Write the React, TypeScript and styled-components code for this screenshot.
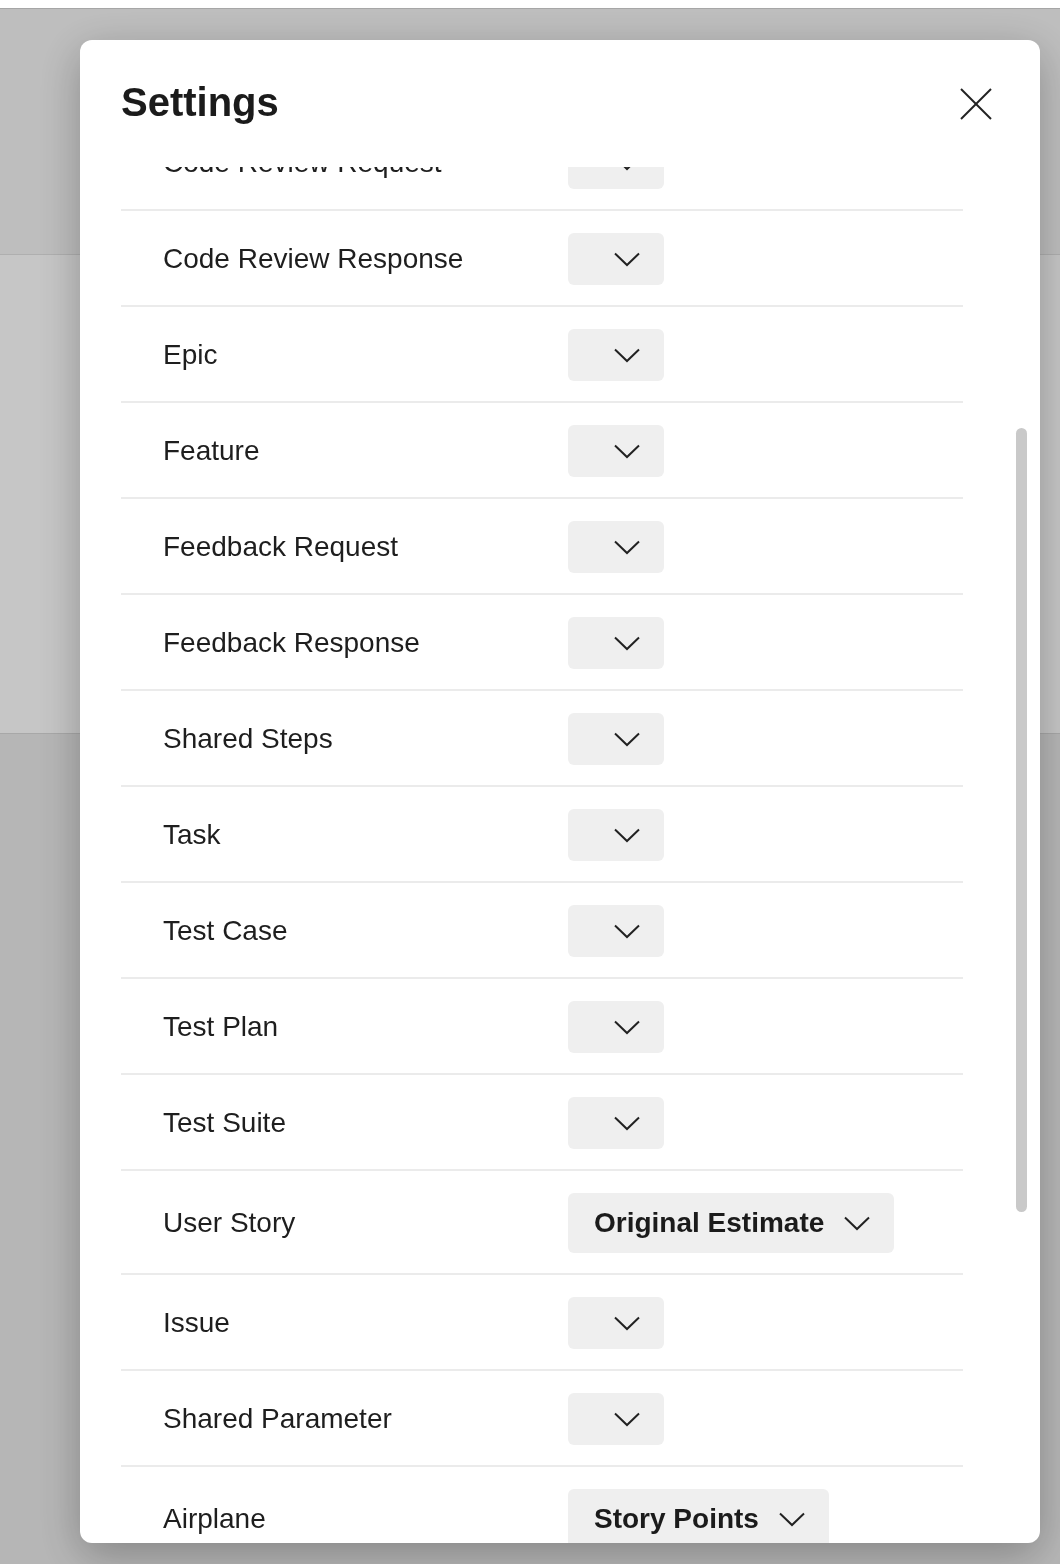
import React, { useLayoutEffect, useRef } from 'react';
import styled, { createGlobalStyle } from 'styled-components';

type WorkItemType = {
  name: string;
  field?: string;
};

const workItemTypes: WorkItemType[] = [
  { name: 'Bug' },
  { name: 'Change Request' },
  { name: 'Code Review Request' },
  { name: 'Code Review Response' },
  { name: 'Epic' },
  { name: 'Feature' },
  { name: 'Feedback Request' },
  { name: 'Feedback Response' },
  { name: 'Shared Steps' },
  { name: 'Task' },
  { name: 'Test Case' },
  { name: 'Test Plan' },
  { name: 'Test Suite' },
  { name: 'User Story', field: 'Original Estimate' },
  { name: 'Issue' },
  { name: 'Shared Parameter' },
  { name: 'Airplane', field: 'Story Points' },
  { name: 'Impediment' },
  { name: 'Risk' },
  { name: 'Review' },
  { name: 'Scenario' },
  { name: 'Requirement' },
  { name: 'Product Backlog Item' },
];

// row that sits half hidden under the header in the screenshot
const FIRST_VISIBLE = 'Code Review Request';
const FIRST_VISIBLE_OFFSET = 52;

const Chevron = () => (
  <svg width="26" height="24" viewBox="0 0 26 24" fill="none">
    <polyline points="1,6.5 13,18 25,6.5" stroke="#222" strokeWidth="2" />
  </svg>
);

const CloseIcon = () => (
  <svg width="32" height="32" viewBox="0 0 32 32" fill="none">
    <line x1="1" y1="1" x2="31" y2="31" stroke="#222" strokeWidth="2" />
    <line x1="31" y1="1" x2="1" y2="31" stroke="#222" strokeWidth="2" />
  </svg>
);

const App = () => {
  const bodyRef = useRef<HTMLDivElement>(null);
  const anchorRef = useRef<HTMLDivElement>(null);

  useLayoutEffect(() => {
    const body = bodyRef.current;
    const anchor = anchorRef.current;
    if (body && anchor) {
      const offset = anchor.getBoundingClientRect().top - body.getBoundingClientRect().top;
      body.scrollTop = offset + FIRST_VISIBLE_OFFSET;
    }
  }, []);

  return (
    <>
      <GlobalStyle />
      <Page>
        <TopStrip />
        <PageHeader />
        <PageCard />
      </Page>
      <Backdrop>
        <Dialog>
          <DialogHeader>
            <Title>Settings</Title>
            <CloseButton aria-label="Close">
              <CloseIcon />
            </CloseButton>
          </DialogHeader>
          <DialogBody ref={bodyRef}>
            {workItemTypes.map(item => (
              <Row key={item.name} ref={item.name === FIRST_VISIBLE ? anchorRef : undefined}>
                <Label>{item.name}</Label>
                <div>
                  <Select type="button">
                    <SelectValue>{item.field}</SelectValue>
                    <Chevron />
                  </Select>
                </div>
              </Row>
            ))}
          </DialogBody>
          <ScrollThumb />
        </Dialog>
      </Backdrop>
    </>
  );
};

const GlobalStyle = createGlobalStyle`
  html, body {
    margin: 0;
    padding: 0;
    background: #ebebeb;
    font-family: "Liberation Sans", Arial, sans-serif;
  }

  * {
    box-sizing: border-box;
  }
`;

const Page = styled.div`
  min-height: 1564px;
  background: #ebebeb;
`;

const TopStrip = styled.div`
  height: 8px;
  background: #ffffff;
`;

const PageHeader = styled.div`
  height: 246px;
  background: #f5f5f5;
  border-top: 1px solid #d6d6d6;
`;

const PageCard = styled.div`
  height: 480px;
  background: #ffffff;
  border-top: 1px solid #e2e2e2;
  border-bottom: 1px solid #d9d9d9;
`;

const Backdrop = styled.div`
  position: fixed;
  top: 8px;
  left: 0;
  right: 0;
  bottom: 0;
  display: flex;
  padding: 32px 20px 21px 80px;
  background: rgba(0, 0, 0, 0.225);
`;

const Dialog = styled.div`
  position: relative;
  flex: 1;
  display: flex;
  flex-direction: column;
  overflow: hidden;
  background: #ffffff;
  border-radius: 12px;
  box-shadow: 0 12px 44px rgba(0, 0, 0, 0.28);
`;

const DialogHeader = styled.div`
  flex: none;
  height: 127px;
  display: flex;
  align-items: flex-start;
  justify-content: space-between;
  padding: 38px 48px 0 41px;
`;

const Title = styled.h1`
  margin: 0;
  font-size: 40px;
  line-height: 48px;
  font-weight: 700;
  color: #1b1b1b;
`;

const CloseButton = styled.button`
  margin-top: 10px;
  padding: 0;
  border: none;
  background: none;
  cursor: pointer;

  svg {
    display: block;
  }
`;

const DialogBody = styled.div`
  flex: 1;
  min-height: 0;
  overflow-y: auto;
  padding: 0 77px 0 41px;
  scrollbar-width: none;

  &::-webkit-scrollbar {
    display: none;
  }
`;

const Row = styled.div`
  display: grid;
  grid-template-columns: 447px 1fr;
  align-items: center;
  padding: 22px 0 20px;
  border-bottom: 2px solid #ebebeb;
`;

const Label = styled.div`
  padding-left: 42px;
  font-size: 28px;
  line-height: 32px;
  color: #1e1e1e;
`;

const Select = styled.button`
  display: inline-flex;
  align-items: center;
  gap: 20px;
  padding: 14px 24px 14px 26px;
  border: none;
  border-radius: 6px;
  background: #efefef;
  font-family: inherit;
  cursor: pointer;

  svg {
    display: block;
  }
`;

const SelectValue = styled.span`
  font-size: 28px;
  line-height: 32px;
  font-weight: 700;
  color: #1b1b1b;
`;

const ScrollThumb = styled.div`
  position: absolute;
  top: 388px;
  right: 13px;
  width: 11px;
  height: 784px;
  border-radius: 6px;
  background: #c9c9c9;
`;

export default App;
